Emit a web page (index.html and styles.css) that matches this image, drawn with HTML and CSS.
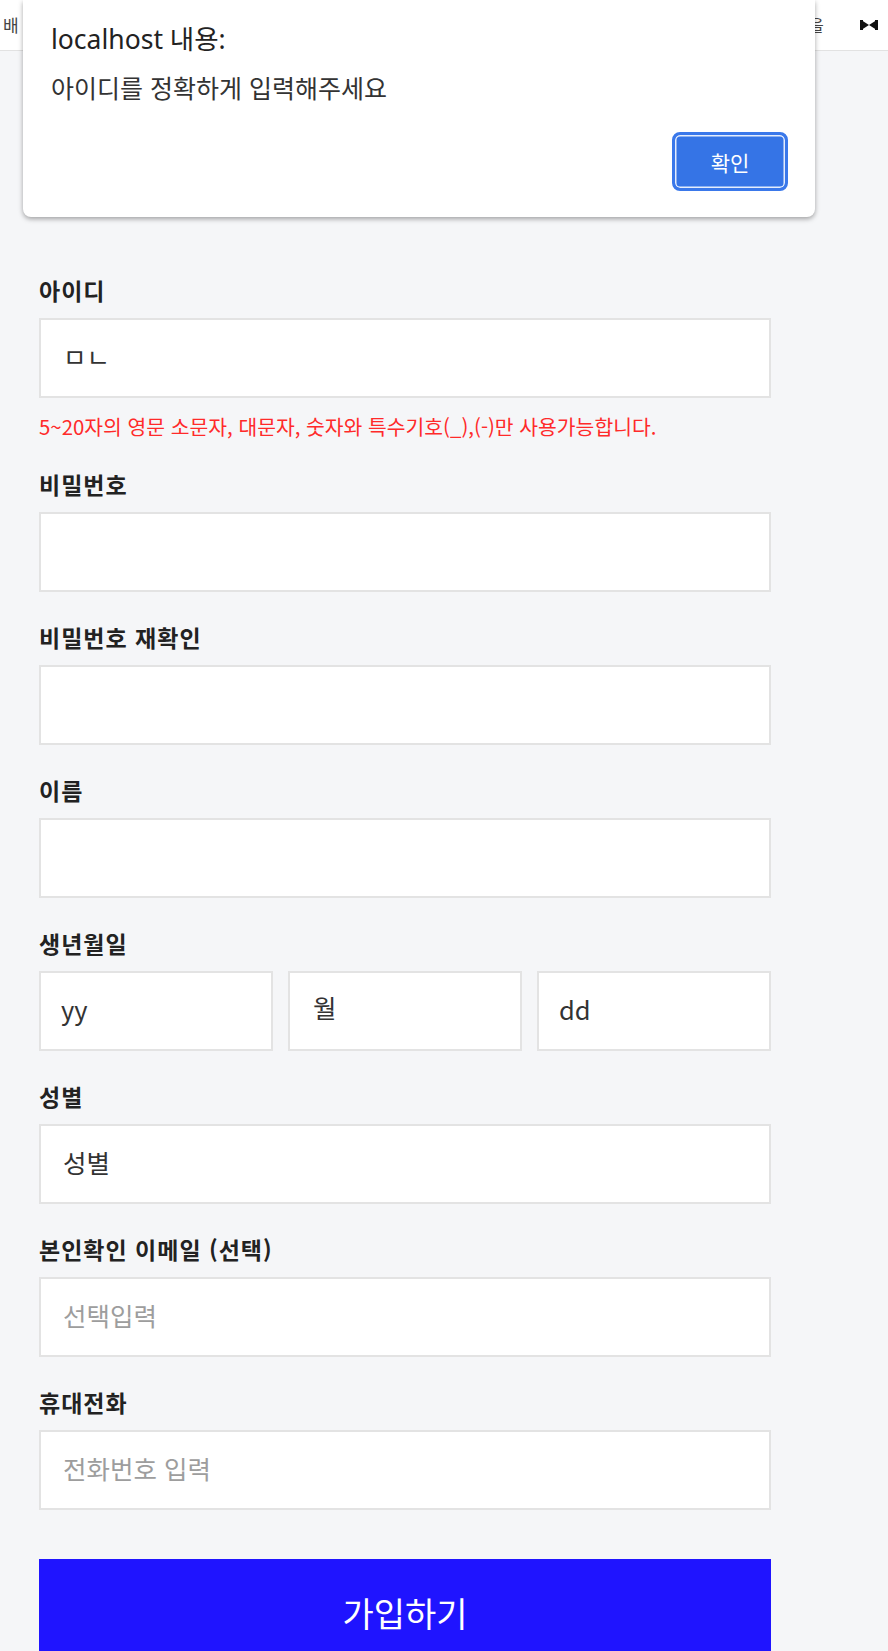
FILE: index.html
```html
<!DOCTYPE html>
<html lang="ko">
<head>
<meta charset="utf-8">
<title>회원가입</title>
<link rel="stylesheet" href="styles.css">
</head>
<body>
<header class="topbar">
  <span class="topbar-left">배</span>
  <div class="topbar-right">
    <span class="topbar-text">을</span>
    <svg class="topbar-icon" width="18" height="10" viewBox="0 0 18 10" aria-hidden="true">
      <rect x="0" y="0" width="3" height="10" fill="#111"/>
      <polygon points="2,0.5 9,5 2,9.5" fill="#111"/>
      <polygon points="16,0.5 9,5 16,9.5" fill="#111"/>
      <rect x="15" y="0" width="3" height="10" fill="#111"/>
    </svg>
  </div>
</header>

<div class="dialog" role="alertdialog">
  <div class="dialog-title">localhost 내용:</div>
  <div class="dialog-msg">아이디를 정확하게 입력해주세요</div>
  <div class="dialog-actions">
    <button class="dialog-btn" type="button">확인</button>
  </div>
</div>

<main class="form">
  <div class="field">
    <label class="label">아이디</label>
    <input class="box" type="text" value="ㅁㄴ">
    <p class="error">5~20자의 영문 소문자, 대문자, 숫자와 특수기호(_),(-)만 사용가능합니다.</p>
  </div>
  <div class="field">
    <label class="label">비밀번호</label>
    <input class="box" type="password">
  </div>
  <div class="field">
    <label class="label">비밀번호 재확인</label>
    <input class="box" type="password">
  </div>
  <div class="field">
    <label class="label">이름</label>
    <input class="box" type="text">
  </div>
  <div class="field">
    <label class="label">생년월일</label>
    <div class="birth">
      <input class="box box-year" type="text" value="yy">
      <div class="box box-month">월</div>
      <input class="box box-day" type="text" value="dd">
    </div>
  </div>
  <div class="field">
    <label class="label">성별</label>
    <div class="box">성별</div>
  </div>
  <div class="field">
    <label class="label">본인확인 이메일 (선택)</label>
    <input class="box" type="text" placeholder="선택입력">
  </div>
  <div class="field">
    <label class="label">휴대전화</label>
    <input class="box" type="text" placeholder="전화번호 입력">
  </div>
  <button class="submit" type="button">가입하기</button>
</main>
</body>
</html>
```

FILE: styles.css
```css
* { box-sizing: border-box; }

html, body {
  margin: 0;
  padding: 0;
}

body {
  background: #f5f6f8;
  font-family: "Noto Sans CJK KR", "Noto Sans", sans-serif;
  color: #222;
  width: 888px;
  min-height: 1651px;
  overflow: hidden;
}

.topbar {
  height: 51px;
  background: #fff;
  border-bottom: 1px solid #e2e2e2;
  display: flex;
  align-items: center;
  justify-content: space-between;
  padding: 0 10px 0 3px;
}

.topbar-left,
.topbar-text {
  font-size: 17px;
  color: #444;
  line-height: 20px;
}

.topbar-right {
  display: flex;
  align-items: center;
  gap: 36px;
}

.topbar-icon { display: block; }

.dialog {
  position: absolute;
  top: 0;
  left: 23px;
  width: 792px;
  height: 217px;
  background: #fff;
  border-radius: 0 0 8px 8px;
  box-shadow: 0 2px 5px rgba(0, 0, 0, 0.35);
  padding: 24px 27px 0 28px;
  display: flex;
  flex-direction: column;
}

.dialog-title {
  font-family: "Noto Sans", "Noto Sans CJK KR", sans-serif;
  font-size: 26.5px;
  line-height: 30px;
  color: #222;
}

.dialog-msg {
  margin-top: 18px;
  font-size: 25px;
  line-height: 30px;
  color: #333;
}

.dialog-actions {
  margin-top: 30px;
  display: flex;
  justify-content: flex-end;
}

.dialog-btn {
  width: 116px;
  height: 59px;
  border: 3px solid #3a78ea;
  border-radius: 8px;
  background: #3574e6;
  box-shadow: inset 0 0 0 1.5px #e4edfd;
  color: #fff;
  font-family: "Noto Sans CJK KR", sans-serif;
  font-size: 21px;
  padding: 0;
}

.form {
  padding: 227px 0 0 39px;
  width: 771px;
}

.field {
  margin-bottom: 33px;
}

.label {
  display: block;
  font-size: 23px;
  letter-spacing: 1px;
  font-weight: 700;
  line-height: 24px;
  margin-bottom: 16px;
  color: #222;
}

.box {
  display: flex;
  align-items: center;
  width: 100%;
  height: 80px;
  margin: 0;
  border: 2px solid #e3e3e3;
  background: #fff;
  padding: 0 22px 5px;
  font-family: "Noto Sans CJK KR", sans-serif;
  font-size: 25.5px;
  color: #333;
  outline: none;
  border-radius: 0;
}

.box::placeholder {
  color: #9d9d9d;
}

.error {
  margin: 18px 0 0;
  padding-bottom: 3px;
  font-size: 20.4px;
  line-height: 20px;
  color: #ff2a2a;
}

.birth {
  display: grid;
  grid-template-columns: 1fr 1fr 1fr;
  gap: 15px;
}

.box-year { padding-left: 20px; }
.box-month { padding-left: 23px; padding-bottom: 9px; }
.box-day { padding-left: 20px; }

.submit {
  display: block;
  width: 100%;
  height: 110px;
  margin-top: 49px;
  border: 0;
  background: #1f14ff;
  color: #fff;
  font-family: "Noto Sans CJK KR", sans-serif;
  font-size: 34px;
  padding: 0 0 4px;
}
```
